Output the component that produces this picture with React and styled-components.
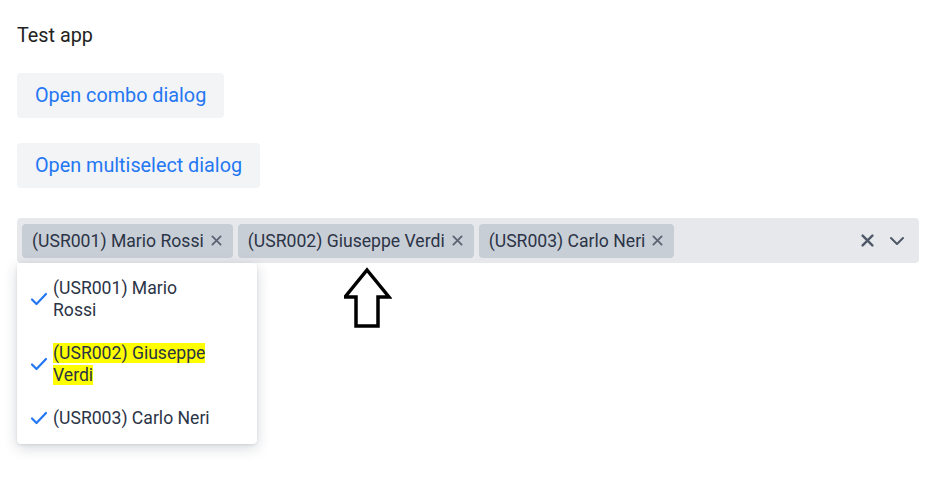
import React from 'react'
import styled, { createGlobalStyle } from 'styled-components'

const users = [
    { id: 'USR001', name: 'Mario Rossi' },
    { id: 'USR002', name: 'Giuseppe Verdi', highlight: true },
    { id: 'USR003', name: 'Carlo Neri' },
]

const CloseIcon = ({ size = 12, stroke = 2 }) => (
    <svg width={size} height={size} viewBox="0 0 12 12" fill="none">
        <path d="M1.5 1.5 L10.5 10.5 M10.5 1.5 L1.5 10.5" stroke="currentColor" strokeWidth={stroke} strokeLinecap="round" />
    </svg>
)

const ChevronIcon = () => (
    <svg width="16" height="10" viewBox="0 0 16 10" fill="none">
        <path d="M2 2 L8 8 L14 2" stroke="currentColor" strokeWidth="2" strokeLinecap="round" strokeLinejoin="round" />
    </svg>
)

const CheckIcon = () => (
    <svg width="18" height="14" viewBox="0 0 18 14" fill="none">
        <path d="M2 7.5 L6.5 12 L16 2" stroke="currentColor" strokeWidth="2.2" strokeLinecap="round" strokeLinejoin="round" />
    </svg>
)

const UpArrow = () => (
    <svg width="48" height="64" viewBox="0 0 48 64" fill="none">
        <polygon points="23,4 45,31 34,31 34,60 12,60 12,31 1,31" fill="#fff" stroke="#000" strokeWidth="3.5" strokeLinejoin="miter" />
    </svg>
)

const App = () => {
    return (
        <>
            <GlobalStyle />
            <Page>
                <Heading>Test app</Heading>
                <Button>Open combo dialog</Button>
                <Button>Open multiselect dialog</Button>

                <SelectWrap>
                    <Select>
                        <Chips>
                            {users.map(u => (
                                <Chip key={u.id}>
                                    ({u.id}) {u.name}
                                    <ChipRemove><CloseIcon size={11} stroke={2} /></ChipRemove>
                                </Chip>
                            ))}
                        </Chips>
                        <Controls>
                            <ClearButton><CloseIcon size={13} stroke={2.2} /></ClearButton>
                            <ChevronButton><ChevronIcon /></ChevronButton>
                        </Controls>
                    </Select>

                    <Menu>
                        {users.map(u => (
                            <Option key={u.id}>
                                <Check><CheckIcon /></Check>
                                <OptionLabel>
                                    {u.highlight
                                        ? <Mark>({u.id}) {u.name}</Mark>
                                        : `(${u.id}) ${u.name}`}
                                </OptionLabel>
                            </Option>
                        ))}
                    </Menu>

                    <ArrowMark><UpArrow /></ArrowMark>
                </SelectWrap>
            </Page>
        </>
    )
}

export default App


// STYLED COMPONENTS
const GlobalStyle = createGlobalStyle`
    html, body {
        height: 100%;
    }
    body {
        margin: 0;
        background: #fff;
        font-family: Roboto, "Liberation Sans", sans-serif;
        color: #1f2937;
    }
    #root {
        min-height: 100%;
    }
`;

const Page = styled.main`
    min-height: 100vh;
    box-sizing: border-box;
    padding: 23px 20px 0 17px;
    display: flex;
    flex-direction: column;
    align-items: flex-start;
`;

const Heading = styled.div`
    font-size: 19.8px;
    line-height: 26px;
    color: #222;
    margin-bottom: 24px;
`;

const Button = styled.button`
    font-family: inherit;
    font-size: 19.8px;
    color: #2477f2;
    background: #f3f4f6;
    border: none;
    border-radius: 4px;
    height: 45px;
    padding: 0 18px;
    margin-bottom: 25px;
    cursor: pointer;
`;

const SelectWrap = styled.div`
    position: relative;
    align-self: stretch;
    margin-top: 5px;
`;

const Select = styled.div`
    display: flex;
    align-items: center;
    height: 45px;
    background: #e6e8ec;
    border-radius: 4px;
    padding: 0 14px 0 5px;
`;

const Chips = styled.div`
    flex: 1;
    display: flex;
    gap: 5px;
`;

const Chip = styled.div`
    display: flex;
    align-items: center;
    height: 34px;
    padding: 0 11px 0 10px;
    background: #c8ced6;
    border-radius: 4px;
    font-size: 17.6px;
    color: #2b3446;
    white-space: nowrap;
`;

const ChipRemove = styled.span`
    display: flex;
    margin-left: 7px;
    color: #5b6472;
`;

const Controls = styled.div`
    display: flex;
    align-items: center;
    gap: 15px;
`;

const ClearButton = styled.span`
    display: flex;
    color: #4f5866;
`;

const ChevronButton = styled.span`
    display: flex;
    color: #4f5866;
`;

const Menu = styled.div`
    position: absolute;
    top: 45px;
    left: 0;
    width: 240px;
    box-sizing: border-box;
    background: #fff;
    border-radius: 4px;
    box-shadow: 0 4px 14px rgba(30, 41, 59, 0.18), 0 1px 3px rgba(30, 41, 59, 0.1);
    padding: 14px 0 15px;
    display: flex;
    flex-direction: column;
    gap: 21px;
`;

const Option = styled.div`
    display: flex;
    align-items: center;
    padding: 0 16px 0 13px;
`;

const Check = styled.span`
    display: flex;
    color: #2477f2;
    margin-right: 5px;
`;

const OptionLabel = styled.span`
    font-size: 17.6px;
    line-height: 22px;
    color: #2b3446;
    max-width: 160px;
`;

const Mark = styled.span`
    background: #ffff00;
`;

const ArrowMark = styled.div`
    position: absolute;
    top: 48px;
    left: 327px;
`;
